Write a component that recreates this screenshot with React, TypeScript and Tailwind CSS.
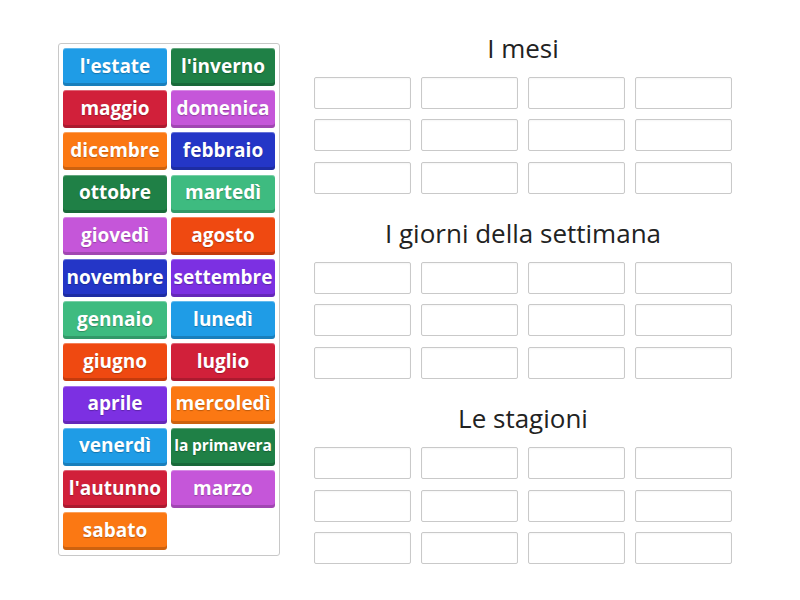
import React from "react";

type Tile = { label: string; color: string; small?: boolean };

const tiles: Tile[] = [
  { label: "l'estate", color: "bg-[#1f9ce6]" },
  { label: "l'inverno", color: "bg-[#1f8046]" },
  { label: "maggio", color: "bg-[#d1203a]" },
  { label: "domenica", color: "bg-[#c556d9]" },
  { label: "dicembre", color: "bg-[#fb7813]" },
  { label: "febbraio", color: "bg-[#2436c7]" },
  { label: "ottobre", color: "bg-[#1f8046]" },
  { label: "martedì", color: "bg-[#3ebb80]" },
  { label: "giovedì", color: "bg-[#c556d9]" },
  { label: "agosto", color: "bg-[#ef4911]" },
  { label: "novembre", color: "bg-[#2436c7]" },
  { label: "settembre", color: "bg-[#7c30e2]" },
  { label: "gennaio", color: "bg-[#3ebb80]" },
  { label: "lunedì", color: "bg-[#1f9ce6]" },
  { label: "giugno", color: "bg-[#ef4911]" },
  { label: "luglio", color: "bg-[#d1203a]" },
  { label: "aprile", color: "bg-[#7c30e2]" },
  { label: "mercoledì", color: "bg-[#fb7813]" },
  { label: "venerdì", color: "bg-[#1f9ce6]" },
  { label: "la primavera", color: "bg-[#1f8046]", small: true },
  { label: "l'autunno", color: "bg-[#d1203a]" },
  { label: "marzo", color: "bg-[#c556d9]" },
  { label: "sabato", color: "bg-[#fb7813]" },
];

const sections = ["I mesi", "I giorni della settimana", "Le stagioni"];

const Slot = () => (
  <div className="h-[32px] rounded-[2px] border border-[#c9c9c9] bg-white shadow-[inset_0_1px_2px_rgba(0,0,0,0.04)]" />
);

export default function App() {
  return (
    <div
      className="flex h-[600px] w-[800px] bg-white"
      style={{ fontFamily: '"Open Sans", "Noto Sans", sans-serif' }}
    >
      <div className="ml-[58px] mt-[43px] h-[513px] w-[222px] rounded-[3px] border border-[#c8c8c8] p-[4px]">
        <div className="grid grid-cols-2 gap-x-[4px] gap-y-[4.2px]">
          {tiles.map((t) => (
            <div
              key={t.label}
              className={`${t.color} flex h-[38px] items-center justify-center rounded-[3px] font-bold text-white shadow-[inset_0_-3px_0_rgba(0,0,0,0.18),inset_0_1px_0_rgba(255,255,255,0.3)] [text-shadow:0_1px_1px_rgba(0,0,0,0.25)] ${
                t.small ? "text-[15.5px] tracking-[-0.1px]" : "text-[19px]"
              }`}
            >
              <span className="-mt-[2px] whitespace-nowrap">{t.label}</span>
            </div>
          ))}
        </div>
      </div>

      <div className="ml-[34px] mt-[32px] flex w-[418px] flex-col gap-[23.6px]">
        {sections.map((s) => (
          <section key={s} className="flex flex-col gap-[13px]">
            <h2 className="text-center text-[26px] leading-[32px] text-[#222]">
              {s}
            </h2>
            <div className="grid grid-cols-4 gap-x-[10.3px] gap-y-[10.3px]">
              {Array.from({ length: 12 }).map((_, i) => (
                <Slot key={i} />
              ))}
            </div>
          </section>
        ))}
      </div>
    </div>
  );
}
